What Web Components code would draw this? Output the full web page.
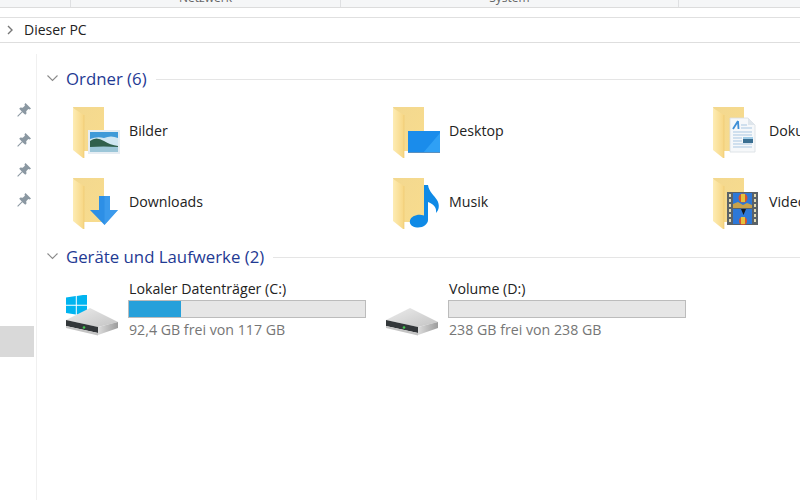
<!DOCTYPE html>
<html lang="de">
<head>
<meta charset="utf-8">
<title>Dieser PC</title>
<style>
  html, body { margin: 0; height: 100%; overflow: hidden; background: #fff; }
  body { font-family: "Open Sans", "Noto Sans", "Liberation Sans", sans-serif; color: #222; }
</style>
</head>
<body>
<explorer-window>
  <ribbon-tabs slot="ribbon">
    <ribbon-tab style="--w:70px"></ribbon-tab>
    <ribbon-tab style="--w:270px">Netzwerk</ribbon-tab>
    <ribbon-tab style="--w:338px">System</ribbon-tab>
    <ribbon-tab style="--w:122px"></ribbon-tab>
  </ribbon-tabs>
  <address-bar slot="address">Dieser PC</address-bar>
  <nav-rail slot="nav"></nav-rail>
  <group-section title="Ordner (6)">
    <folder-tile kind="bilder">Bilder</folder-tile>
    <folder-tile kind="desktop">Desktop</folder-tile>
    <folder-tile kind="dokumente">Dokumente</folder-tile>
    <folder-tile kind="downloads">Downloads</folder-tile>
    <folder-tile kind="musik">Musik</folder-tile>
    <folder-tile kind="videos">Videos</folder-tile>
  </group-section>
  <group-section title="Geräte und Laufwerke (2)" class="drives">
    <drive-tile system used="22" info="92,4 GB frei von 117 GB">Lokaler Datenträger (C:)</drive-tile>
    <drive-tile used="0" info="238 GB frei von 238 GB">Volume (D:)</drive-tile>
  </group-section>
</explorer-window>

<script>
const FOLDER_DEFS = `
  <linearGradient id="back" x1="0" y1="0" x2="1" y2="1">
    <stop offset="0" stop-color="#f3d88f"/><stop offset="1" stop-color="#f8dc8e"/>
  </linearGradient>
  <linearGradient id="flap" x1="0" y1="0" x2="1" y2="0">
    <stop offset="0" stop-color="#fdecb4"/><stop offset="1" stop-color="#f7d683"/>
  </linearGradient>`;

const FOLDER_BASE = `
  <path d="M0 0H31V44H11Z" fill="url(#back)"/>
  <path d="M0 1L11 8V51L10 51L0 43Z" fill="url(#flap)"/>
  <path d="M11 8V51" stroke="#efca74" stroke-width=".7"/>`;

const OVERLAYS = {
  bilder: `
    <rect x="15" y="23" width="32" height="24" fill="#e6edf3"/>
    <rect x="17" y="25" width="28" height="20" fill="#cfe6f2"/>
    <path d="M17 25H45V31Q38 28 31 31Q24 29 17 32Z" fill="#3f9ad8"/>
    <path d="M17 34Q23 29 31 34Q37 38 45 39V41H17Z" fill="#2f5f4c"/>
    <path d="M17 40Q30 39 45 40V45H17Z" fill="#9cc6d8"/>`,
  desktop: `
    <rect x="15" y="24" width="32" height="22" fill="#1a8ceb"/>
    <path d="M30 46L47 26V46Z" fill="#2fa0f5"/>
    <rect x="15" y="45" width="32" height="1" fill="#5a8fbe"/>`,
  dokumente: `
    <path d="M17 11H35L42 18V45H17Z" fill="#f6f8fa" stroke="#d8dde2" stroke-width=".8"/>
    <path d="M35 11V18H42Z" fill="#dfe6ec"/>
    <path d="M20 22L25 14M25 14L25.500 22" stroke="#3f8fd6" stroke-width="1.800" fill="none"/>
    <path d="M28 18H34M28 21H39M20 25H39M20 28H39M20 31H29M20 34H29M20 37H39M20 40H39" stroke="#a9c7e2" stroke-width="1"/>
    <rect x="30" y="30" width="10" height="6" fill="#3a6f92"/>
    <rect x="30" y="30" width="10" height="2" fill="#9fcbe6"/>`,
  downloads: `
    <path d="M26 18H37V32H45L31.500 47L17 32H26Z" fill="#2d8fe6"/>
    <path d="M31.500 18H37V32H45L31.500 47Z" fill="#4aa6f2" opacity=".5"/>`,
  musik: `
    <path d="M31 7H35C36 14 41 17 44 22C47 27 46 32 43 35C44 29 40 26 35 24V42C35 46 30 50 24 49.500C19 49 16 46 17 42.500C18 38 25 35.500 31 37.500Z" fill="#0f8ae6"/>`,
  videos: `
    <rect x="14" y="14" width="31" height="33" fill="#5a6268"/>
    <rect x="20" y="15" width="19" height="15" fill="#2d78d8"/>
    <rect x="20" y="31" width="19" height="15" fill="#2d78d8"/>
    <path d="M20 30V26L25 24L30 27L34 25L39 27V30Z" fill="#c9a24a"/>
    <circle cx="30" cy="20" r="4.500" fill="#d8542c"/>
    <path d="M28 16H32V24H28Z" fill="#e3c23d"/>
    <path d="M28 31H33L30.500 37Z" fill="#16181c"/>
    <circle cx="30" cy="43" r="4" fill="#d8542c"/>
    <path d="M28 39H32V46H28Z" fill="#e3c23d"/>
    <path d="M16 16h2v3h-2zM16 21h2v3h-2zM16 26h2v3h-2zM16 31h2v3h-2zM16 36h2v3h-2zM16 41h2v3h-2zM41 16h2v3h-2zM41 21h2v3h-2zM41 26h2v3h-2zM41 31h2v3h-2zM41 36h2v3h-2zM41 41h2v3h-2z" fill="#e4dcb4"/>`
};

class RibbonTab extends HTMLElement {
  constructor() {
    super();
    this.attachShadow({ mode: 'open' }).innerHTML = `
      <style>
        :host { display: block; flex: none; width: var(--w); height: 7px; overflow: hidden; box-sizing: border-box;
                border-left: 1px solid #dfe0e2; text-align: center; font-size: 12px; color: #666; }
        :host(:first-child) { border-left: 0; }
        span { display: block; line-height: 14px; margin-top: -9px; }
      </style><span><slot></slot></span>`;
  }
}

class RibbonTabs extends HTMLElement {
  constructor() {
    super();
    this.attachShadow({ mode: 'open' }).innerHTML = `
      <style>
        :host { display: flex; height: 7px; background: #f5f6f7; border-bottom: 1px solid #dcdcdc; }
      </style><slot></slot>`;
  }
}

class AddressBar extends HTMLElement {
  constructor() {
    super();
    this.attachShadow({ mode: 'open' }).innerHTML = `
      <style>
        :host { display: flex; align-items: center; gap: 11px; height: 24px; margin-top: 9px; padding-left: 7px;
                border-top: 1px solid #e0e0e0; border-bottom: 1px solid #dedede; font-size: 14px; color: #222; }
        svg { flex: none; }
        span { margin-top: -1px; }
      </style>
      <svg width="6" height="10" viewBox="0 0 6 10"><path d="M1 1L5 5L1 9" fill="none" stroke="#777" stroke-width="1.400"/></svg>
      <span><slot></slot></span>`;
  }
}

class NavRail extends HTMLElement {
  constructor() {
    super();
    const pin = `<svg width="14" height="14" viewBox="0 0 14 14"><path d="M8.500 0L14 5.500L12.700 6.500L11.300 6.100L9.200 8.300L9.500 10.600L8.300 11.800L5.400 9.200L1 13.800L.2 13L4.800 8.600L2.200 5.700L3.400 4.500L5.700 4.800L7.900 2.700L7.500 1.300Z" fill="#8b98a2"/></svg>`;
    this.attachShadow({ mode: 'open' }).innerHTML = `
      <style>
        :host { display: flex; flex-direction: column; flex: none; width: 36px; margin-top: 11px; padding-top: 41px;
                box-sizing: content-box; border-right: 1px solid #f0f0f0; }
        .pin { display: flex; justify-content: center; align-items: center; height: 30px; width: 34px; padding-left: 13px; box-sizing: border-box; }
        .sel { width: 34px; height: 31px; margin-top: 111px; background: #d9d9d9; }
      </style>
      <div class="pin">${pin}</div><div class="pin">${pin}</div><div class="pin">${pin}</div><div class="pin">${pin}</div>
      <div class="sel"></div>`;
  }
}

class GroupSection extends HTMLElement {
  constructor() {
    super();
    this.attachShadow({ mode: 'open' }).innerHTML = `
      <style>
        :host { display: block; }
        header { display: flex; align-items: center; height: 24px; color: #1f3a93; font-size: 16.800px; }
        svg { flex: none; margin-right: 8px; }
        .rule { flex: 1; height: 1px; background: #e5e5e5; margin-left: 9px; margin-top: 3px; }
        .grid { display: grid; grid-template-columns: repeat(3, 320px); padding: 6px 0 0 26px; }
      </style>
      <header>
        <svg width="11" height="7" viewBox="0 0 11 7"><path d="M.5 .5L5.500 5.500L10.500 .5" fill="none" stroke="#8a8a8a" stroke-width="1.100"/></svg>
        <span class="title"></span><span class="rule"></span>
      </header>
      <div class="grid"><slot></slot></div>`;
  }
  connectedCallback() {
    this.shadowRoot.querySelector('.title').textContent = this.getAttribute('title');
    this.removeAttribute('title');
  }
}

class FolderTile extends HTMLElement {
  constructor() {
    super();
    this.attachShadow({ mode: 'open' }).innerHTML = `
      <style>
        :host { display: flex; align-items: center; gap: 8px; height: 71px; font-size: 14.200px; color: #222; white-space: nowrap; }
        svg { flex: none; align-self: flex-start; margin-top: 11px; }
        span { margin-top: -3px; }
      </style>
      <svg width="48" height="52" viewBox="0 0 48 52"></svg>
      <span><slot></slot></span>`;
  }
  connectedCallback() {
    const kind = this.getAttribute('kind');
    this.shadowRoot.querySelector('svg').innerHTML = `<defs>${FOLDER_DEFS}</defs>${FOLDER_BASE}${OVERLAYS[kind]}`;
  }
}

class DriveTile extends HTMLElement {
  constructor() {
    super();
    this.attachShadow({ mode: 'open' }).innerHTML = `
      <style>
        :host { display: flex; gap: 9px; margin: 4px 0 0 -7px; font-size: 14.200px; width: 320px; }
        svg { flex: none; margin-top: 17px; }
        .col { width: 238px; }
        .name { line-height: 22px; color: #222; padding-left: 1px; white-space: nowrap; }
        .bar { height: 16px; border: 1px solid #bcbcbc; background: #e6e6e6; }
        .fill { height: 100%; background: #26a0da; }
        .info { margin-top: 2px; line-height: 20px; color: #767676; padding-left: 1px; white-space: nowrap; }
      </style>
      <svg width="53" height="42" viewBox="0 0 53 42"></svg>
      <div class="col">
        <div class="name"><slot></slot></div>
        <div class="bar"><div class="fill"></div></div>
        <div class="info"></div>
      </div>`;
  }
  connectedCallback() {
    const win = this.hasAttribute('system') ? `
      <path d="M0 2.500L9.800 1V9.800H0ZM10.800 .9L21 -.6V9.800H10.800ZM0 10.800H9.800V19.400L0 18ZM10.800 10.800H21V21L10.800 19.600Z" fill="#00b4f0"/>` : '';
    this.shadowRoot.querySelector('svg').innerHTML = `
      <defs><linearGradient id="top" x1="0" y1="0" x2="1" y2="1">
        <stop offset="0" stop-color="#ececec"/><stop offset="1" stop-color="#c4c4c4"/></linearGradient>
      <linearGradient id="side" x1="0" y1="0" x2="1" y2="0">
        <stop offset="0" stop-color="#dcdcdc"/><stop offset="1" stop-color="#9c9c9c"/></linearGradient></defs>
      ${win}
      <path d="M0 25L24 13L52 27L32 32Z" fill="url(#top)"/>
      <path d="M32 32L52 27V33L32 40Z" fill="url(#side)"/>
      <path d="M0 25L32 32V38L0 31Z" fill="#33373a"/>
      <path d="M0 31L32 38V40.500L0 33Z" fill="#c4c4c4"/>
      <circle cx="18" cy="32.500" r="1.300" fill="#3fc84a"/>`;
    this.shadowRoot.querySelector('.fill').style.width = this.getAttribute('used') + '%';
    this.shadowRoot.querySelector('.info').textContent = this.getAttribute('info');
  }
}

class ExplorerWindow extends HTMLElement {
  constructor() {
    super();
    this.attachShadow({ mode: 'open' }).innerHTML = `
      <style>
        :host { display: flex; flex-direction: column; width: 800px; height: 500px; overflow: hidden; background: #fff; }
        .body { display: flex; flex: 1; min-height: 0; }
        main { flex: 1; min-width: 0; padding: 23px 0 0 10px; overflow: hidden; }
        ::slotted(.drives) { margin-top: 6px; }
      </style>
      <slot name="ribbon"></slot>
      <slot name="address"></slot>
      <div class="body">
        <slot name="nav"></slot>
        <main><slot></slot></main>
      </div>`;
  }
}

customElements.define('ribbon-tab', RibbonTab);
customElements.define('ribbon-tabs', RibbonTabs);
customElements.define('address-bar', AddressBar);
customElements.define('nav-rail', NavRail);
customElements.define('group-section', GroupSection);
customElements.define('folder-tile', FolderTile);
customElements.define('drive-tile', DriveTile);
customElements.define('explorer-window', ExplorerWindow);
</script>
</body>
</html>
